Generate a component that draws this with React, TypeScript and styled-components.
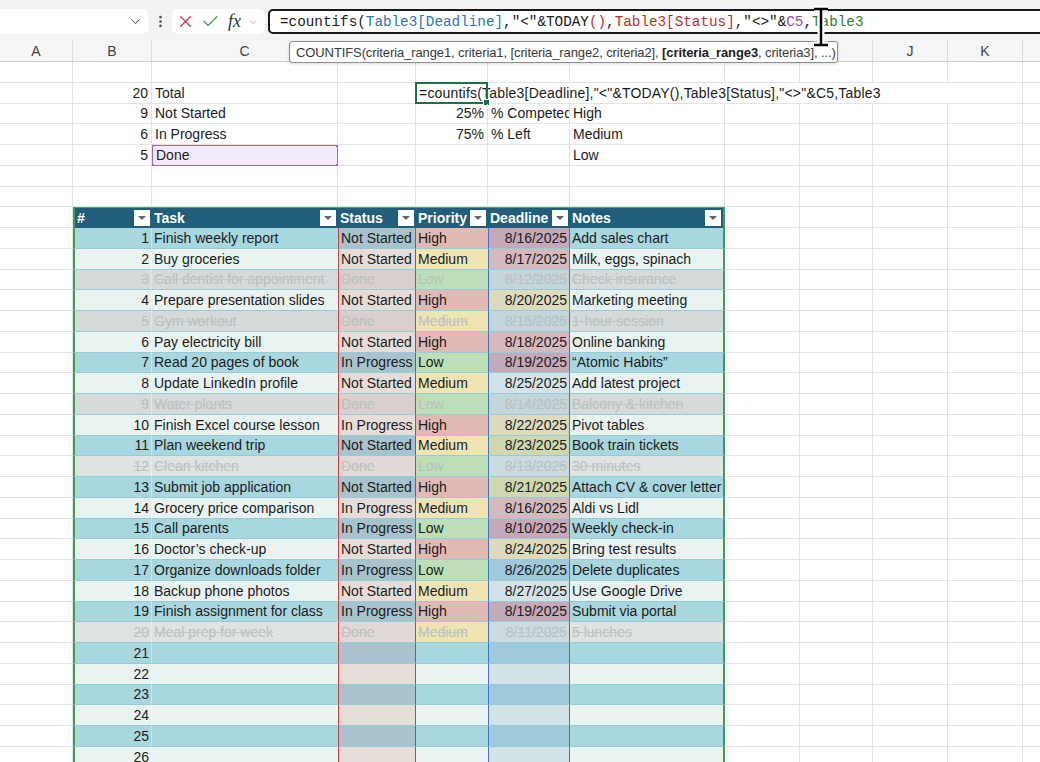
import React from 'react';
import styled, { createGlobalStyle } from 'styled-components';
import { ChevronDown, EllipsisVertical, X, Check } from 'lucide-react';

const COLS = '73px 79px 186px 78px 72px 82px 155px 75px 73px 75px 75px 75px';
const ROW_H = 20.75;

const GlobalStyle = createGlobalStyle`
  html, body {
    margin: 0;
    padding: 0;
    background: #fff;
    overflow: hidden;
  }
  body {
    font-family: 'Liberation Sans', Arial, sans-serif;
    color: #1b1b1b;
  }
`;

const Page = styled.div`
  width: 1040px;
  height: 762px;
  overflow: hidden;
  position: relative;
  background: #fff;
`;

/* ---------- formula bar ---------- */

const Toolbar = styled.div`
  height: 40px;
  box-sizing: border-box;
  padding-top: 3px;
  background: #f3f3f3;
  display: flex;
  align-items: center;
`;

const NameBox = styled.div`
  width: 156px;
  flex-shrink: 0;
  margin-left: -8px;
  height: 25px;
  box-sizing: border-box;
  padding-right: 5px;
  background: #fff;
  border-radius: 6px;
  display: flex;
  align-items: center;
  justify-content: flex-end;
  color: #444;
`;

const Dots = styled.div`
  width: 24px;
  flex-shrink: 0;
  display: flex;
  justify-content: center;
  color: #555;
`;

const FxBox = styled.div`
  width: 93px;
  flex-shrink: 0;
  height: 25px;
  box-sizing: border-box;
  background: #fff;
  border-radius: 6px;
  display: flex;
  align-items: center;
  gap: 6px;
  padding-left: 4px;
`;

const FxLabel = styled.span`
  font-family: 'Liberation Serif', 'Times New Roman', serif;
  font-style: italic;
  font-size: 18px;
  color: #333;
  margin-left: 2px;
`;

const FormulaInput = styled.div`
  flex: 1;
  margin-left: 3px;
  margin-right: -12px;
  height: 25px;
  box-sizing: border-box;
  border: 2px solid #1a1a1a;
  border-radius: 5px;
  background: #fff;
  padding-left: 10px;
  display: flex;
  align-items: center;
  font-family: 'Liberation Mono', 'Courier New', monospace;
  font-size: 14.3px;
  white-space: pre;
`;

const Tok = styled.span<{ $c?: string }>`
  color: ${(p) => p.$c || '#1b1b1b'};
`;

/* ---------- column headers ---------- */

const ColHeaderRow = styled.div`
  display: grid;
  grid-template-columns: ${COLS};
  height: 22px;
  background: #f6f6f6;
  border-bottom: 1px solid #d4d4d4;
  box-sizing: border-box;
`;

const ColLetter = styled.div`
  display: flex;
  align-items: center;
  justify-content: center;
  font-size: 14px;
  color: #444;
  border-right: 1px solid #dcdcdc;
`;

const Tooltip = styled.div`
  position: absolute;
  left: 289px;
  top: 41px;
  width: 549px;
  height: 22px;
  box-sizing: border-box;
  background: #fff;
  border: 1px solid #8f8f8f;
  border-radius: 3px;
  box-shadow: 0 1px 3px rgba(0, 0, 0, 0.15);
  padding-left: 6px;
  display: flex;
  align-items: center;
  font-size: 13px;
  letter-spacing: -0.1px;
  color: #3a3a3a;
  white-space: nowrap;
  overflow: hidden;
  z-index: 5;

  b {
    color: #222;
  }
`;

const Cursor = styled.svg`
  position: absolute;
  left: 810px;
  top: 5px;
  z-index: 6;
`;

/* ---------- sheet ---------- */

const Row = styled.div`
  display: grid;
  grid-template-columns: ${COLS};
  height: ${ROW_H}px;
`;

const Cell = styled.div<{ $right?: boolean; $span?: number }>`
  position: relative;
  box-sizing: border-box;
  height: 100%;
  grid-column: ${(p) => (p.$span ? `span ${p.$span}` : 'auto')};
  border-right: 1px solid #e3e3e3;
  border-bottom: 1px solid #e3e3e3;
  display: flex;
  align-items: center;
  justify-content: ${(p) => (p.$right ? 'flex-end' : 'flex-start')};
  padding: 0 3px;
  font-size: 14px;
  white-space: nowrap;
  overflow: ${(p) => (p.$span ? 'visible' : 'hidden')};
`;

const CellFormula = styled.span`
  letter-spacing: 0.2px;
`;

const ActiveBox = styled.div`
  position: absolute;
  left: -1px;
  top: -1px;
  width: 73px;
  height: 22px;
  box-sizing: border-box;
  border: 2px solid #1e7145;

  &::after {
    content: '';
    position: absolute;
    right: -4px;
    bottom: -4px;
    width: 5px;
    height: 5px;
    background: #1e7145;
    border: 1px solid #fff;
  }
`;

const RangeCell = styled(Cell)`
  background: #f3eafb;
  border: 1.5px solid #a366d6;
`;

const Corner = styled.span<{ $x: 'l' | 'r'; $y: 't' | 'b' }>`
  position: absolute;
  width: 4px;
  height: 4px;
  background: #a366d6;
  ${(p) => (p.$x === 'l' ? 'left: -3px;' : 'right: -3px;')}
  ${(p) => (p.$y === 't' ? 'top: -3px;' : 'bottom: -3px;')}
`;

const HeadCell = styled.div<{ $first?: boolean; $last?: boolean }>`
  box-sizing: border-box;
  height: 100%;
  background: #215e7c;
  color: #fff;
  font-weight: bold;
  font-size: 14px;
  display: flex;
  align-items: center;
  justify-content: space-between;
  padding: 0 2px 0 2px;
  border-top: 1px solid #4f9e6c;
  border-left: ${(p) => (p.$first ? '2px solid #3f9a5c' : 'none')};
  border-right: ${(p) => (p.$last ? '2px solid #3f9a5c' : 'none')};
`;

const FilterBtn = styled.span`
  width: 16px;
  height: 16px;
  background: #fff;
  display: flex;
  align-items: center;
  justify-content: center;

  &::before {
    content: '';
    border-left: 4px solid transparent;
    border-right: 4px solid transparent;
    border-top: 4px solid #666;
  }
`;

const TCell = styled.div<{
  $bg: string;
  $done?: boolean;
  $right?: boolean;
  $l?: string;
  $r?: string;
}>`
  box-sizing: border-box;
  height: 100%;
  background: ${(p) => p.$bg};
  color: ${(p) => (p.$done ? '#b8bfbe' : '#1b1b1b')};
  text-decoration: ${(p) => (p.$done ? 'line-through' : 'none')};
  text-decoration-color: #c2c8c7;
  border-bottom: 1px solid #98cbd9;
  border-left: ${(p) => p.$l || 'none'};
  border-right: ${(p) => p.$r || '1px solid rgba(255,255,255,0.35)'};
  display: flex;
  align-items: center;
  justify-content: ${(p) => (p.$right ? 'flex-end' : 'flex-start')};
  padding: 0 2px;
  font-size: 14px;
  white-space: nowrap;
  overflow: hidden;
`;

type Band = 'blue' | 'light';
type Priority = 'High' | 'Medium' | 'Low';
type Status = 'Not Started' | 'In Progress' | 'Done';

interface Task {
  task: string;
  status: Status;
  priority: Priority;
  deadline: string;
  notes: string;
}

const tasks: Task[] = [
  { task: 'Finish weekly report', status: 'Not Started', priority: 'High', deadline: '8/16/2025', notes: 'Add sales chart' },
  { task: 'Buy groceries', status: 'Not Started', priority: 'Medium', deadline: '8/17/2025', notes: 'Milk, eggs, spinach' },
  { task: 'Call dentist for appointment', status: 'Done', priority: 'Low', deadline: '8/12/2025', notes: 'Check insurance' },
  { task: 'Prepare presentation slides', status: 'Not Started', priority: 'High', deadline: '8/20/2025', notes: 'Marketing meeting' },
  { task: 'Gym workout', status: 'Done', priority: 'Medium', deadline: '8/15/2025', notes: '1-hour session' },
  { task: 'Pay electricity bill', status: 'Not Started', priority: 'High', deadline: '8/18/2025', notes: 'Online banking' },
  { task: 'Read 20 pages of book', status: 'In Progress', priority: 'Low', deadline: '8/19/2025', notes: '“Atomic Habits”' },
  { task: 'Update LinkedIn profile', status: 'Not Started', priority: 'Medium', deadline: '8/25/2025', notes: 'Add latest project' },
  { task: 'Water plants', status: 'Done', priority: 'Low', deadline: '8/14/2025', notes: 'Balcony & kitchen' },
  { task: 'Finish Excel course lesson', status: 'In Progress', priority: 'High', deadline: '8/22/2025', notes: 'Pivot tables' },
  { task: 'Plan weekend trip', status: 'Not Started', priority: 'Medium', deadline: '8/23/2025', notes: 'Book train tickets' },
  { task: 'Clean kitchen', status: 'Done', priority: 'Low', deadline: '8/13/2025', notes: '30 minutes' },
  { task: 'Submit job application', status: 'Not Started', priority: 'High', deadline: '8/21/2025', notes: 'Attach CV & cover letter' },
  { task: 'Grocery price comparison', status: 'In Progress', priority: 'Medium', deadline: '8/16/2025', notes: 'Aldi vs Lidl' },
  { task: 'Call parents', status: 'In Progress', priority: 'Low', deadline: '8/10/2025', notes: 'Weekly check-in' },
  { task: 'Doctor’s check-up', status: 'Not Started', priority: 'High', deadline: '8/24/2025', notes: 'Bring test results' },
  { task: 'Organize downloads folder', status: 'In Progress', priority: 'Low', deadline: '8/26/2025', notes: 'Delete duplicates' },
  { task: 'Backup phone photos', status: 'Not Started', priority: 'Medium', deadline: '8/27/2025', notes: 'Use Google Drive' },
  { task: 'Finish assignment for class', status: 'In Progress', priority: 'High', deadline: '8/19/2025', notes: 'Submit via portal' },
  { task: 'Meal prep for week', status: 'Done', priority: 'Medium', deadline: '8/11/2025', notes: '5 lunches' },
];

const BAND: Record<Band, string> = { blue: '#a9d7e0', light: '#e9f3f1' };
const DONE_BG: Record<Band, string> = { blue: '#d5dbda', light: '#dfe3e1' };
const STATUS_BG: Record<Band, string> = { blue: '#a8c3cd', light: '#e6ddd8' };
const STATUS_DONE: Record<Band, string> = { blue: '#d9d0ce', light: '#e1d9d7' };
const PRIORITY_BG: Record<Priority, string> = { High: '#e2bab4', Medium: '#efe5b2', Low: '#bcdfb7' };
const DEADLINE_BG: Record<string, Record<Band, string>> = {
  red: { blue: '#c5a9b8', light: '#d6b9bf' },
  yellow: { blue: '#cfd7ae', light: '#dcdbbd' },
  none: { blue: '#9ecadb', light: '#d2e2e7' },
  done: { blue: '#c4d5dc', light: '#ccdbe0' },
};

const RED = '1.5px solid #c9403a';
const BLUE = '1.5px solid #3f73c7';
const GREEN = '2px solid #3f9a5c';

const dueKind = (t: Task) => {
  if (t.status === 'Done') return 'done';
  const day = Number(t.deadline.split('/')[1]);
  if (day < 20) return 'red';
  if (day <= 24) return 'yellow';
  return 'none';
};

const blanks = (n: number) => Array.from({ length: n }, (_, i) => <Cell key={`b${i}`} />);

const TaskRow = ({ n }: { n: number }) => {
  const t = tasks[n - 1];
  const band: Band = n % 2 === 1 ? 'blue' : 'light';
  const done = t?.status === 'Done';
  const plain = done ? DONE_BG[band] : BAND[band];
  const status = done ? STATUS_DONE[band] : STATUS_BG[band];
  const prio = t ? PRIORITY_BG[t.priority] : BAND[band];
  const due = t ? DEADLINE_BG[dueKind(t)][band] : DEADLINE_BG.none[band];

  return (
    <Row>
      <Cell />
      <TCell $bg={plain} $done={done} $right $l={GREEN}>
        {n}
      </TCell>
      <TCell $bg={plain} $done={done} $r="none">
        {t?.task}
      </TCell>
      <TCell $bg={status} $done={done} $l={RED} $r={RED}>
        {t?.status}
      </TCell>
      <TCell $bg={prio} $done={done} $r="none">
        {t?.priority}
      </TCell>
      <TCell $bg={due} $done={done} $right $l={BLUE} $r={BLUE}>
        {t?.deadline}
      </TCell>
      <TCell $bg={plain} $done={done} $r={GREEN}>
        {t?.notes}
      </TCell>
      {blanks(5)}
    </Row>
  );
};

const headers = ['#', 'Task', 'Status', 'Priority', 'Deadline', 'Notes'];
// D..I sit under the function tooltip, L is off the right edge
const letters = ['A', 'B', 'C', '', '', '', '', '', '', 'J', 'K', ''];

const App = () => {
  return (
    <Page>
      <GlobalStyle />
      <Toolbar>
        <NameBox>
          <ChevronDown size={15} strokeWidth={1.6} />
        </NameBox>
        <Dots>
          <EllipsisVertical size={15} strokeWidth={2.4} />
        </Dots>
        <FxBox>
          <X size={19} strokeWidth={1.5} color="#d13438" />
          <Check size={19} strokeWidth={1.5} color="#3d9b4a" />
          <FxLabel>fx</FxLabel>
          <ChevronDown size={12} strokeWidth={1.4} color="#888" />
        </FxBox>
        <FormulaInput>
          <Tok>=countifs(</Tok>
          <Tok $c="#2f74c0">Table3[Deadline]</Tok>
          <Tok>,"&lt;"&amp;TODAY</Tok>
          <Tok $c="#b8322c">()</Tok>
          <Tok>,</Tok>
          <Tok $c="#b8322c">Table3[Status]</Tok>
          <Tok>,"&lt;&gt;"&amp;</Tok>
          <Tok $c="#8e4fbf">C5</Tok>
          <Tok>,</Tok>
          <Tok $c="#2e7d32">Table3</Tok>
        </FormulaInput>
      </Toolbar>

      <ColHeaderRow>
        {letters.map((l, i) => (
          <ColLetter key={i}>{l}</ColLetter>
        ))}
      </ColHeaderRow>

      <Tooltip>
        COUNTIFS(criteria_range1, criteria1, [criteria_range2, criteria2],&nbsp;<b>[criteria_range3</b>, criteria3], ...)
      </Tooltip>

      <Cursor width="22" height="44" viewBox="0 0 22 44">
        <path d="M4 4 H18 M11 4 V40 M4 40 H18" stroke="#fff" strokeWidth="7" fill="none" />
        <path d="M4 4 H18 M11 4 V40 M4 40 H18" stroke="#000" strokeWidth="2.5" fill="none" />
      </Cursor>

      <Row>{blanks(12)}</Row>
      <Row>
        <Cell />
        <Cell $right>20</Cell>
        <Cell>Total</Cell>
        <Cell />
        <Cell $span={7}>
          <CellFormula>=countifs(Table3[Deadline],"&lt;"&amp;TODAY(),Table3[Status],"&lt;&gt;"&amp;C5,Table3</CellFormula>
          <ActiveBox />
        </Cell>
        <Cell />
      </Row>
      <Row>
        <Cell />
        <Cell $right>9</Cell>
        <Cell>Not Started</Cell>
        <Cell />
        <Cell $right>25%</Cell>
        <Cell>% Competed</Cell>
        <Cell>High</Cell>
        {blanks(5)}
      </Row>
      <Row>
        <Cell />
        <Cell $right>6</Cell>
        <Cell>In Progress</Cell>
        <Cell />
        <Cell $right>75%</Cell>
        <Cell>% Left</Cell>
        <Cell>Medium</Cell>
        {blanks(5)}
      </Row>
      <Row>
        <Cell />
        <Cell $right>5</Cell>
        <RangeCell>
          Done
          <Corner $x="l" $y="t" />
          <Corner $x="r" $y="t" />
          <Corner $x="l" $y="b" />
          <Corner $x="r" $y="b" />
        </RangeCell>
        <Cell />
        <Cell />
        <Cell />
        <Cell>Low</Cell>
        {blanks(5)}
      </Row>
      <Row>{blanks(12)}</Row>
      <Row>{blanks(12)}</Row>

      <Row>
        <Cell />
        {headers.map((h, i) => (
          <HeadCell key={h} $first={i === 0} $last={i === headers.length - 1}>
            {h}
            <FilterBtn />
          </HeadCell>
        ))}
        {blanks(5)}
      </Row>
      {Array.from({ length: 26 }, (_, i) => (
        <TaskRow key={i} n={i + 1} />
      ))}
    </Page>
  );
};

export default App;
